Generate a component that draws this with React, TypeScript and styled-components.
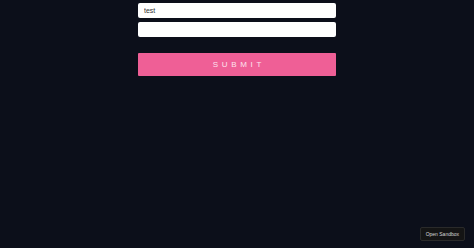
import React from 'react';
import styled, { createGlobalStyle } from 'styled-components';

const GlobalStyle = createGlobalStyle`
  html, body {
    margin: 0;
    padding: 0;
    background: #0c0f1a;
    height: 100%;
  }
  #root {
    height: 100%;
  }
`;

const Page = styled.div`
  position: relative;
  min-height: 248px;
  height: 100%;
  background: #0c0f1a;
  font-family: 'Liberation Sans', Arial, sans-serif;
  display: flex;
  justify-content: center;
`;

const Form = styled.form`
  width: 198px;
  margin-top: 3px;
  display: flex;
  flex-direction: column;
`;

const Field = styled.input`
  box-sizing: border-box;
  width: 100%;
  height: 15px;
  border: none;
  border-radius: 2px;
  background: #ffffff;
  padding: 0 6px;
  font-family: 'Liberation Sans', Arial, sans-serif;
  font-size: 7px;
  color: #333;
  outline: none;
  margin-bottom: ${(p: { $gap: number }) => p.$gap}px;
`;

const SubmitButton = styled.button`
  box-sizing: border-box;
  width: 100%;
  height: 23px;
  border: none;
  border-radius: 1px;
  background: #ef5f96;
  color: #fde3ee;
  font-family: 'Liberation Sans', Arial, sans-serif;
  font-size: 8px;
  letter-spacing: 3.7px;
  padding: 0 0 0 3.7px;
  cursor: pointer;
`;

const SandboxButton = styled.a`
  position: absolute;
  right: 9px;
  bottom: 7px;
  box-sizing: border-box;
  height: 14px;
  padding: 0 5px;
  display: flex;
  align-items: center;
  background: #141414;
  border: 1px solid #2a2a2a;
  border-radius: 2px;
  color: #d8d8d8;
  font-family: 'Liberation Sans', Arial, sans-serif;
  font-size: 5px;
  text-decoration: none;
`;

export default function App() {
  return (
    <Page>
      <GlobalStyle />
      <Form onSubmit={(e) => e.preventDefault()}>
        <Field $gap={4} defaultValue="test" />
        <Field $gap={16} />
        <SubmitButton type="submit">SUBMIT</SubmitButton>
      </Form>
      <SandboxButton>Open Sandbox</SandboxButton>
    </Page>
  );
}
